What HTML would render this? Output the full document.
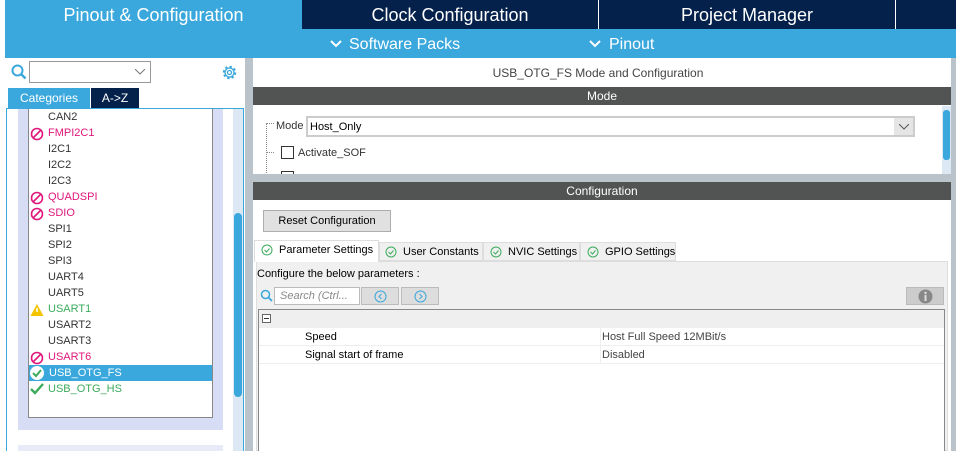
<!DOCTYPE html>
<html><head><style>
*{margin:0;padding:0;box-sizing:border-box}
body{width:956px;height:451px;overflow:hidden;background:#fff;font-family:"Liberation Sans",sans-serif;position:relative;font-size:12px;color:#333}
.a{position:absolute;white-space:nowrap}
.tab{position:absolute;top:0;height:29px;color:#fff;font-size:18px;text-align:center;line-height:31px}
.it{position:absolute;left:48px;font-size:11px;color:#333;top:0}
.pk{color:#e0177a}.gr{color:#3bab5b}
.ban{position:absolute;left:30px;width:14px;height:14px}
.tb{position:absolute;font-size:11px;color:#000;white-space:nowrap}
</style></head><body>
<div class="tab" style="left:5px;width:297px;background:#3aa8dc">Pinout &amp; Configuration</div>
<div class="tab" style="left:302px;width:296px;background:#03214b">Clock Configuration</div>
<div class="tab" style="left:598px;width:297px;background:#03214b;border-left:1px solid #fff">Project Manager</div>
<div class="tab" style="left:895px;width:61px;background:#03214b;border-left:1px solid #fff"></div>
<div class="a" style="left:5px;top:29px;width:951px;height:29px;background:#3aa8dc;color:#fff;font-size:16px;line-height:31px">
<svg class="a" style="left:325px;top:11px" width="12" height="8"><path d="M1 1l5 5 5-5" fill="none" stroke="#fff" stroke-width="2"/></svg>
<span class="a" style="left:344px">Software Packs</span>
<svg class="a" style="left:584px;top:11px" width="12" height="8"><path d="M1 1l5 5 5-5" fill="none" stroke="#fff" stroke-width="2"/></svg>
<span class="a" style="left:604px">Pinout</span></div>
<!-- left panel -->
<svg class="a" style="left:11px;top:64px" width="16" height="17"><circle cx="6.5" cy="6.5" r="5" fill="none" stroke="#3aa8dc" stroke-width="2"/><path d="M10 10l4.5 4.5" stroke="#3aa8dc" stroke-width="2.4"/></svg>
<div class="a" style="left:29px;top:61px;width:122px;height:22px;border:1px solid #999;background:#fff"><svg class="a" style="left:105px;top:7px" width="10" height="6"><path d="M0 0l5 5 5-5" fill="none" stroke="#777"/></svg></div>
<svg class="a" style="left:221px;top:64px" width="17" height="17" viewBox="0 0 17 17"><circle cx="8.5" cy="8.5" r="5.5" fill="none" stroke="#3aa8dc" stroke-width="2.5" stroke-dasharray="2.2 2.1"/><circle cx="8.5" cy="8.5" r="4.5" fill="none" stroke="#3aa8dc" stroke-width="1.3"/><circle cx="8.5" cy="8.5" r="2" fill="none" stroke="#3aa8dc" stroke-width="1.3"/></svg>
<div class="a" style="left:8px;top:88px;width:82px;height:20px;background:#3aa8dc;color:#fff;font-size:12px;text-align:center;line-height:20px">Categories</div>
<div class="a" style="left:91px;top:88px;width:48px;height:20px;background:#03214b;color:#fff;font-size:12px;text-align:center;line-height:20px">A-&gt;Z</div>
<div class="a" style="left:6px;top:108px;width:238px;height:343px;border:1px solid #3aa8dc;border-bottom:none;background:#fff"></div>
<div class="a" style="left:18px;top:109px;width:205px;height:321px;background:#d6ddf5"></div>
<div class="a" style="left:18px;top:445px;width:205px;height:6px;background:#e6ebf7"></div>
<div class="a" style="left:28px;top:109px;width:185px;height:309px;background:#fff;border:1px solid #888;border-top:none"></div>
<div class="a" style="left:233px;top:109px;width:10px;height:342px;background:#dde8f5"></div>
<div class="a" style="left:234px;top:213px;width:8px;height:184px;background:#3aa8dc;border-radius:4px"></div>
<div class="a" style="left:245px;top:58px;width:8px;height:393px;background:#b9c3c9"></div>
<div class="a" style="left:0;top:111px;width:230px">
<div class="it" style="top:0">CAN2</div>
<svg class="ban" style="top:16px"><circle cx="7" cy="7" r="5.5" fill="none" stroke="#e0177a" stroke-width="1.6"/><path d="M3 11L11 3" stroke="#e0177a" stroke-width="1.6"/></svg><div class="it pk" style="top:16px">FMPI2C1</div>
<div class="it" style="top:32px">I2C1</div>
<div class="it" style="top:48px">I2C2</div>
<div class="it" style="top:64px">I2C3</div>
<svg class="ban" style="top:80px"><circle cx="7" cy="7" r="5.5" fill="none" stroke="#e0177a" stroke-width="1.6"/><path d="M3 11L11 3" stroke="#e0177a" stroke-width="1.6"/></svg><div class="it pk" style="top:80px">QUADSPI</div>
<svg class="ban" style="top:96px"><circle cx="7" cy="7" r="5.5" fill="none" stroke="#e0177a" stroke-width="1.6"/><path d="M3 11L11 3" stroke="#e0177a" stroke-width="1.6"/></svg><div class="it pk" style="top:96px">SDIO</div>
<div class="it" style="top:112px">SPI1</div>
<div class="it" style="top:128px">SPI2</div>
<div class="it" style="top:144px">SPI3</div>
<div class="it" style="top:160px">UART4</div>
<div class="it" style="top:176px">UART5</div>
<svg class="ban" style="top:192px"><path d="M7 1L13.5 13H0.5Z" fill="#f5c400"/><path d="M7 5v4" stroke="#fff" stroke-width="1.5"/></svg><div class="it gr" style="top:192px">USART1</div>
<div class="it" style="top:208px">USART2</div>
<div class="it" style="top:224px">USART3</div>
<svg class="ban" style="top:240px"><circle cx="7" cy="7" r="5.5" fill="none" stroke="#e0177a" stroke-width="1.6"/><path d="M3 11L11 3" stroke="#e0177a" stroke-width="1.6"/></svg><div class="it pk" style="top:240px">USART6</div>
</div>
<div class="a" style="left:29px;top:365px;width:183px;height:16px;background:#3aa8dc"></div>
<svg class="ban" style="left:30px;top:366px"><circle cx="7" cy="7" r="7" fill="#fff"/><path d="M3 7l3 3 5-6" fill="none" stroke="#3bab5b" stroke-width="2"/></svg><div class="a" style="top:367px;color:#fff;left:49px;font-size:11px">USB_OTG_FS</div>
<svg class="ban" style="left:30px;top:382px"><path d="M1 7l4 4 8-9" fill="none" stroke="#3bab5b" stroke-width="2.4"/></svg><div class="a gr" style="top:383px;left:48px;font-size:11px">USB_OTG_HS</div>
<!-- right -->
<div class="a" style="left:253px;top:66px;width:690px;text-align:center;font-size:12px;color:#444">USB_OTG_FS Mode and Configuration</div>
<div class="a" style="left:253px;top:87px;width:698px;height:18px;background:#525453;color:#fff;text-align:center;line-height:19px">Mode</div>
<div class="a" style="left:951px;top:58px;width:5px;height:393px;background:#b9c3c9"></div>
<div class="a" style="left:266px;top:123px;width:1px;height:50px;border-left:1px dotted #888"></div>
<div class="a" style="left:266px;top:123px;width:8px;border-top:1px dotted #888"></div>
<div class="a" style="left:266px;top:152px;width:8px;border-top:1px dotted #888"></div>
<div class="a" style="left:276px;top:120px;font-size:11px">Mode</div>
<div class="a" style="left:306px;top:116px;width:609px;height:21px;border:2px solid #ccc;background:#fff;font-size:11px;color:#000;line-height:18px;padding-left:2px">Host_Only
<div class="a" style="right:0;top:0;width:19px;height:17px;background:#e5e5e5"><svg class="a" style="left:5px;top:6px" width="10" height="6"><path d="M0 0l5 5 5-5" fill="none" stroke="#555"/></svg></div></div>
<div class="a" style="left:281px;top:146px;width:13px;height:13px;border:1px solid #333;background:#fff"></div>
<div class="a" style="left:298px;top:147px;font-size:11px">Activate_SOF</div>
<div class="a" style="left:281px;top:171px;width:13px;height:3px;border:1px solid #333;border-bottom:none"></div>
<div class="a" style="left:942px;top:106px;width:9px;height:68px;background:#dde8f5"></div>
<div class="a" style="left:943px;top:110px;width:7px;height:50px;background:#3aa8dc;border-radius:3px"></div>
<div class="a" style="left:253px;top:174px;width:698px;height:8px;background:#b9c3c9"></div>
<div class="a" style="left:253px;top:182px;width:698px;height:18px;background:#525453;color:#fff;text-align:center;line-height:19px">Configuration</div>
<div class="a" style="left:263px;top:210px;width:128px;height:22px;background:#e1e1e1;border:1px solid #adadad;font-size:11px;color:#000;text-align:center;line-height:21px">Reset Configuration</div>
<div class="a" style="left:256px;top:261px;width:692px;height:190px;background:#f0f0f0;border:1px solid #ddd"></div>
<div class="a" style="left:254px;top:240px;width:125px;height:22px;background:#fff;border:1px solid #ddd;border-bottom:none"></div>
<div class="a" style="left:379px;top:242px;width:104px;height:19px;background:#f0f0f0;border:1px solid #ddd"></div>
<div class="a" style="left:483px;top:242px;width:97px;height:19px;background:#f0f0f0;border:1px solid #ddd"></div>
<div class="a" style="left:580px;top:242px;width:96px;height:19px;background:#f0f0f0;border:1px solid #ddd"></div>
<div class="tb" style="left:279px;top:244px">Parameter Settings</div>
<div class="tb" style="left:403px;top:246px">User Constants</div>
<div class="tb" style="left:508px;top:246px">NVIC Settings</div>
<div class="tb" style="left:605px;top:246px">GPIO Settings</div>
<svg class="a" style="left:261px;top:244px" width="12" height="12"><circle cx="6" cy="6" r="5" fill="none" stroke="#3bab5b"/><path d="M3.5 6l2 2 3-3.5" fill="none" stroke="#3bab5b"/></svg>
<svg class="a" style="left:385px;top:246px" width="12" height="12"><circle cx="6" cy="6" r="5" fill="none" stroke="#3bab5b"/><path d="M3.5 6l2 2 3-3.5" fill="none" stroke="#3bab5b"/></svg>
<svg class="a" style="left:490px;top:246px" width="12" height="12"><circle cx="6" cy="6" r="5" fill="none" stroke="#3bab5b"/><path d="M3.5 6l2 2 3-3.5" fill="none" stroke="#3bab5b"/></svg>
<svg class="a" style="left:587px;top:246px" width="12" height="12"><circle cx="6" cy="6" r="5" fill="none" stroke="#3bab5b"/><path d="M3.5 6l2 2 3-3.5" fill="none" stroke="#3bab5b"/></svg>
<div class="a" style="left:257px;top:268px;font-size:11px;color:#000">Configure the below parameters :</div>
<svg class="a" style="left:260px;top:289px" width="13" height="13"><circle cx="5.5" cy="5.5" r="4" fill="none" stroke="#3aa8dc" stroke-width="1.5"/><path d="M8.5 8.5l3.5 3.5" stroke="#3aa8dc" stroke-width="1.8"/></svg>
<div class="a" style="left:274px;top:287px;width:86px;height:18px;background:#fff;border:1px solid #bbb;font-size:11px;font-style:italic;color:#888;line-height:16px;padding-left:5px">Search (Ctrl...</div>
<div class="a" style="left:361px;top:287px;width:38px;height:18px;background:#ddd;border:1px solid #bbb"><svg class="a" style="left:12px;top:2px" width="13" height="13"><circle cx="6.5" cy="6.5" r="5.5" fill="none" stroke="#3aa8dc"/><path d="M7.5 4l-2.5 2.5 2.5 2.5" fill="none" stroke="#3aa8dc"/></svg></div>
<div class="a" style="left:401px;top:287px;width:38px;height:18px;background:#ddd;border:1px solid #bbb"><svg class="a" style="left:12px;top:2px" width="13" height="13"><circle cx="6.5" cy="6.5" r="5.5" fill="none" stroke="#3aa8dc"/><path d="M5.5 4l2.5 2.5-2.5 2.5" fill="none" stroke="#3aa8dc"/></svg></div>
<div class="a" style="left:906px;top:287px;width:38px;height:18px;background:#ccc;border:1px solid #bbb"><svg class="a" style="left:11px;top:1px" width="15" height="15"><circle cx="7.5" cy="7.5" r="7" fill="#888"/><rect x="6.5" y="6" width="2" height="6" fill="#ddd"/><circle cx="7.5" cy="4" r="1.2" fill="#ddd"/></svg></div>
<div class="a" style="left:258px;top:309px;width:687px;height:142px;background:#fff;border:1px solid #888;border-bottom:none"></div>
<div class="a" style="left:259px;top:310px;width:685px;height:18px;background:#efefef"></div>
<div class="a" style="left:262px;top:314px;width:9px;height:9px;border:1px solid #666;background:#fff"><div class="a" style="left:1px;top:3px;width:5px;height:1px;background:#333"></div></div>
<div class="a" style="left:259px;top:345px;width:685px;border-top:1px solid #eee"></div>
<div class="a" style="left:259px;top:363px;width:685px;border-top:1px solid #eee"></div>
<div class="a" style="left:600px;top:328px;height:35px;border-left:1px solid #eee"></div>
<div class="a" style="left:305px;top:331px;font-size:11px;color:#000">Speed</div>
<div class="a" style="left:305px;top:349px;font-size:11px;color:#000">Signal start of frame</div>
<div class="a" style="left:602px;top:331px;font-size:11px;color:#444">Host Full Speed 12MBit/s</div>
<div class="a" style="left:602px;top:349px;font-size:11px;color:#444">Disabled</div>
</body></html>
